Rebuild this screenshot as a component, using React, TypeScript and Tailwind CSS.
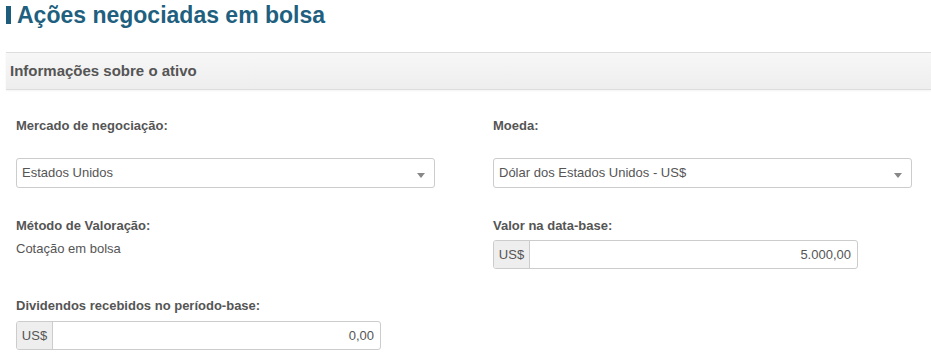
import React from "react";

const font = { fontFamily: '"Liberation Sans", Arial, sans-serif' };

const Caret = () => (
  <svg width="8" height="5" viewBox="0 0 8 5" className="absolute right-[9px] top-[14px]">
    <path d="M0 0h8L4 5z" fill="#888" />
  </svg>
);

const SelectBox = ({ value }: { value: string }) => (
  <div className="relative w-[419px] h-[30px] border border-[#ccc] rounded-[3px] bg-white text-[13px] text-[#555] leading-[28px] pl-[5px]">
    {value}
    <Caret />
  </div>
);

const MoneyInput = ({ value }: { value: string }) => (
  <div className="flex w-[365px] h-[29px] border border-[#ccc] rounded-[3px] bg-white text-[13px] text-[#555] leading-[27px] overflow-hidden">
    <div className="w-[36px] bg-[#eee] border-r border-[#ccc] text-center text-[#555]">US$</div>
    <div className="flex-1 text-right pr-[6px]">{value}</div>
  </div>
);

const Label = ({ children }: { children: React.ReactNode }) => (
  <div className="text-[13px] font-bold text-[#555] leading-[20px] h-[20px]">{children}</div>
);

export default function App() {
  return (
    <div className="w-[931px] h-[364px] bg-white overflow-hidden" style={font}>
      <div className="flex items-center h-[30px] pl-[6px]">
        <div className="w-[5px] h-[18px] bg-[#1e5c7b] mr-[6px]" />
        <h1 className="text-[23px] font-bold text-[#215f7f] leading-[30px]">Ações negociadas em bolsa</h1>
      </div>

      <div className="mt-[22px] ml-[6px] h-[38px] border-y border-[#ddd] bg-gradient-to-b from-[#f7f7f7] to-[#eeeeee] shadow-[0_1px_2px_rgba(0,0,0,0.05)] flex items-center pl-[4px]">
        <span className="text-[15px] font-bold text-[#555]">Informações sobre o ativo</span>
      </div>

      <div className="grid grid-cols-[477px_1fr] pl-[16px]">
        <div className="mt-[26px]">
          <Label>Mercado de negociação:</Label>
          <div className="mt-[22px]">
            <SelectBox value="Estados Unidos" />
          </div>
        </div>
        <div className="mt-[26px]">
          <Label>Moeda:</Label>
          <div className="mt-[22px]">
            <SelectBox value="Dólar dos Estados Unidos - US$" />
          </div>
        </div>

        <div className="mt-[28px]">
          <Label>Método de Valoração:</Label>
          <div className="mt-[3px] text-[13px] text-[#555] leading-[20px]">Cotação em bolsa</div>
        </div>
        <div className="mt-[28px]">
          <Label>Valor na data-base:</Label>
          <div className="mt-[4px]">
            <MoneyInput value="5.000,00" />
          </div>
        </div>

        <div className="mt-[27px] col-span-2">
          <Label>Dividendos recebidos no período-base:</Label>
          <div className="mt-[5px]">
            <MoneyInput value="0,00" />
          </div>
        </div>
      </div>
    </div>
  );
}
